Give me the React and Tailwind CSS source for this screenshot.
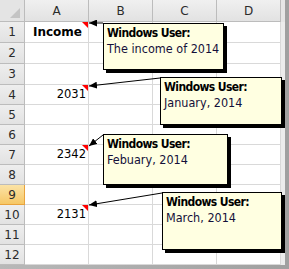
const COLS = ["A", "B", "C", "D"];
const ROWS = [1, 2, 3, 4, 5, 6, 7, 8, 9, 10, 11, 12];

const CELL_A = {
  1: { text: "Income", bold: true },
  4: { text: "2031" },
  7: { text: "2342" },
  10: { text: "2131" },
};

const NOTES = [
  { cls: "left-[103px] top-[23px] w-[121px] h-[47px]", body: "The income of 2014" },
  { cls: "left-[160px] top-[77px] w-[122px] h-[48px]", body: "January, 2014" },
  { cls: "left-[103px] top-[134px] w-[125px] h-[51px]", body: "Febuary, 2014" },
  { cls: "left-[162px] top-[192px] w-[120px] h-[58px]", body: "March, 2014" },
];

// arrow lines: from the note corner to the red marker of the cell
const ARROWS = [
  [103, 23, 89, 23],
  [160, 78, 89, 86],
  [103, 135, 89, 146],
  [162, 193, 89, 205],
];

function Marker() {
  return (
    <span className="absolute top-0 right-0 w-0 h-0 border-l-[6px] border-l-transparent border-t-[6px] border-t-[#ff0000]" />
  );
}

function HeaderRow() {
  return (
    <div className="flex h-[22px]">
      <div className="relative w-[25px] shrink-0 border-r border-b border-[#bcbcbc] bg-[#e4e4e4]">
        <span className="absolute right-[4px] bottom-[3px] w-0 h-0 border-l-[10px] border-l-transparent border-b-[10px] border-b-[#c4c4c4]" />
      </div>
      {COLS.map((c) => (
        <div
          key={c}
          className="w-[64px] shrink-0 flex items-center justify-center border-r border-b border-[#bcbcbc] bg-gradient-to-b from-[#f0f0f0] to-[#e2e2e2] text-[12px] text-[#2b2b2b]"
        >
          {c}
        </div>
      ))}
      <div className="w-[4px] shrink-0 bg-[#e6e6e6]" />
    </div>
  );
}

function Row({ n }) {
  const h = n <= 3 ? "h-[21px]" : "h-[20px]";
  const sel = n === 9;
  const a = CELL_A[n];
  return (
    <div className={`flex ${h}`}>
      <div
        className={
          sel
            ? "w-[25px] shrink-0 flex items-center justify-center border-r border-b border-[#e8a33d] bg-gradient-to-b from-[#fbe3a5] to-[#f6c765] text-[12px] text-[#2b2b2b]"
            : "w-[25px] shrink-0 flex items-center justify-center border-r border-b border-[#bcbcbc] bg-gradient-to-b from-[#eeeeee] to-[#e2e2e2] text-[12px] text-[#2b2b2b]"
        }
      >
        {n}
      </div>
      <div
        className={`relative w-[64px] shrink-0 flex items-center border-r border-b border-[#d9d9d9] text-[11.5px] text-black ${
          a && a.bold ? "justify-start pl-[8px]" : "justify-end pr-[2px]"
        }`}
      >
        {a && <span className={a.bold ? "font-bold text-[12px]" : ""}>{a.text}</span>}
        {a && <Marker />}
      </div>
      <div className="w-[64px] shrink-0 border-r border-b border-[#d9d9d9]" />
      <div className="w-[64px] shrink-0 border-r border-b border-[#d9d9d9]" />
      <div className="w-[64px] shrink-0 border-r border-b border-[#d9d9d9]" />
      <div className="w-[4px] shrink-0 bg-[#ececec]" />
    </div>
  );
}

export default function App() {
  return (
    <div className="relative w-[289px] h-[269px] overflow-hidden bg-gradient-to-r from-[#b8b8b8] to-[#a0a0a0] font-['DejaVu_Sans',sans-serif]">
      <div className="w-[285px] h-[265px] bg-white flex flex-col">
        <HeaderRow />
        {ROWS.map((n) => (
          <Row key={n} n={n} />
        ))}
      </div>

      <svg className="absolute inset-0 pointer-events-none" width="289" height="269">
        <defs>
          <marker id="ah" markerWidth="8" markerHeight="7" refX="8" refY="3.5" orient="auto" markerUnits="userSpaceOnUse">
            <path d="M0 0 L8 3.5 L0 7 Z" fill="#000" />
          </marker>
        </defs>
        {ARROWS.map(([x1, y1, x2, y2], i) => (
          <line key={i} x1={x1} y1={y1} x2={x2} y2={y2} stroke="#000" strokeWidth="1" markerEnd="url(#ah)" />
        ))}
      </svg>

      {NOTES.map((n, i) => (
        <div
          key={i}
          className={`absolute ${n.cls} bg-[#ffffe1] border border-black shadow-[3px_3px_0_#000] px-[3px] pt-[2px] font-['DejaVu_Sans_Condensed','DejaVu_Sans',sans-serif] text-[12.5px] leading-[15px] text-[#14103a]`}
        >
          <div className="font-bold text-black text-[12px] tracking-[-0.6px]">Windows User:</div>
          <div>{n.body}</div>
        </div>
      ))}
    </div>
  );
}
